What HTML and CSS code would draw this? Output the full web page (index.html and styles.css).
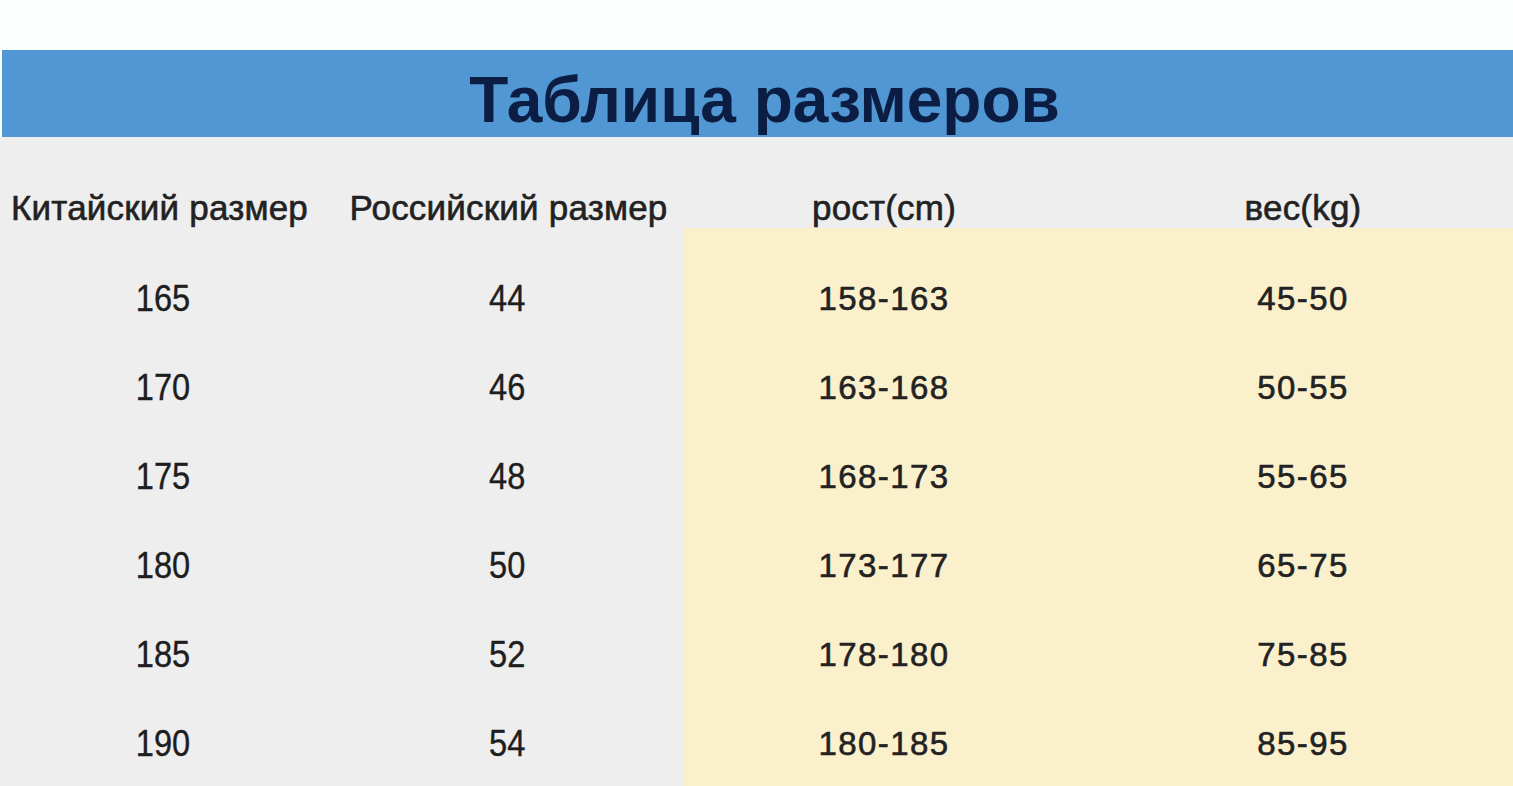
FILE: index.html
```html
<!DOCTYPE html>
<html lang="ru">
<head>
<meta charset="utf-8">
<title>Таблица размеров</title>
<link rel="stylesheet" href="styles.css">
</head>
<body>
<div class="page">
  <div class="top-space"></div>
  <div class="title-bar"><h1 class="title">Таблица размеров</h1></div>
  <div class="table">
    <div class="row head">
      <div class="cell c1">Китайский размер</div>
      <div class="cell c2">Российский размер</div>
      <div class="cell c3">рост(cm)</div>
      <div class="cell c4">вес(kg)</div>
    </div>
    <div class="body">
      <div class="row"><div class="cell c1 n">165</div><div class="cell c2 n">44</div><div class="cell c3 y">158-163</div><div class="cell c4 y">45-50</div></div>
      <div class="row"><div class="cell c1 n">170</div><div class="cell c2 n">46</div><div class="cell c3 y">163-168</div><div class="cell c4 y">50-55</div></div>
      <div class="row"><div class="cell c1 n">175</div><div class="cell c2 n">48</div><div class="cell c3 y">168-173</div><div class="cell c4 y">55-65</div></div>
      <div class="row"><div class="cell c1 n">180</div><div class="cell c2 n">50</div><div class="cell c3 y">173-177</div><div class="cell c4 y">65-75</div></div>
      <div class="row"><div class="cell c1 n">185</div><div class="cell c2 n">52</div><div class="cell c3 y">178-180</div><div class="cell c4 y">75-85</div></div>
      <div class="row"><div class="cell c1 n">190</div><div class="cell c2 n">54</div><div class="cell c3 y">180-185</div><div class="cell c4 y">85-95</div></div>
    </div>
  </div>
</div>
</body>
</html>
```
FILE: styles.css
```css
html, body {
  margin: 0;
  padding: 0;
  background: #ffffff;
  overflow: hidden;
}
.page {
  width: 1513px;
  height: 786px;
  font-family: "Liberation Sans", Arial, sans-serif;
  color: #1e1e1e;
}
.top-space {
  height: 50px;
  background: #fdfefe;
}
.title-bar {
  height: 87px;
  background: #5197d3;
  display: flex;
  align-items: center;
  justify-content: center;
  margin-left: 2px;
}
.title {
  margin: 0;
  padding-left: 14px;
  padding-top: 12px;
  font-family: "Liberation Sans", Arial, sans-serif;
  font-weight: 700;
  font-size: 64px;
  color: #0c1d43;
  line-height: 1;
}
.table {
  background: #eeeeee;
  height: 649px;
}
.row {
  display: grid;
  grid-template-columns: 326px 357px 402px 428px;
  height: 89px;
}
.row.head {
  height: 91px;
}
.head .cell {
  font-size: 35px;
  letter-spacing: 0.2px;
  -webkit-text-stroke: 0.6px #222222;
  color: #222222;
  align-items: flex-end;
  padding-bottom: 0;
  line-height: 1.15;
}
.head .c1 {
  justify-content: flex-start;
  padding-left: 11px;
}
.head .c2 {
  padding-left: 8px;
}
.body {
  padding-top: 25px;
  background: linear-gradient(to right, #eeeeee 0, #eeeeee 683px, #fbf0cc 683px);
}
.cell {
  display: flex;
  align-items: center;
  justify-content: center;
  box-sizing: border-box;
}
.cell.n {
  font-size: 37px;
  transform: scaleX(0.88);
  -webkit-text-stroke: 0.4px #1e1e1e;
  padding-top: 2px;
}
.c2 {
  padding-left: 6px;
}
.cell.y {
  font-size: 33px;
  letter-spacing: 1.4px;
  color: #222222;
  -webkit-text-stroke: 0.6px #222222;
  padding-top: 2px;
}
.c4 {
  padding-left: 8px;
}
```
